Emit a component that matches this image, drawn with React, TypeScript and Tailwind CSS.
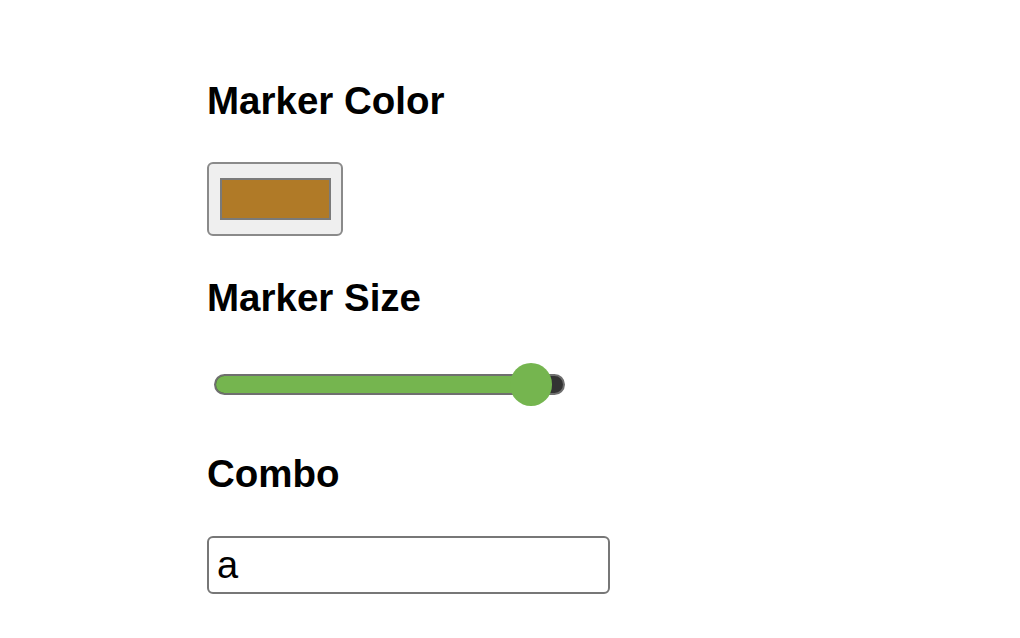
export default function App() {
  return (
    <div className="min-h-[638px] w-[1020px] bg-white pl-[207px] pt-[82px] font-['Liberation_Sans',Arial,sans-serif] text-black">
      <h3 className="text-[38.5px] font-bold leading-[38px]">Marker Color</h3>
      <div className="mt-[42px] flex h-[74px] w-[136px] items-center justify-center rounded-[6px] border-2 border-[#8a8a8a] bg-[#efefef]">
        <div className="h-[42px] w-[111px] border-2 border-[#7a7a7a] bg-[#b07a27]" />
      </div>
      <h3 className="mt-[43px] text-[38.5px] font-bold leading-[38px]">Marker Size</h3>
      <div className="relative mt-[45px] flex h-[44px] w-[360px] items-center">
        <div className="ml-[7px] flex h-[21px] w-[351px] overflow-hidden rounded-full border-2 border-[#6f6f6f] bg-[#333]">
          <div className="h-full w-[320px] bg-[#75b54f]" />
        </div>
        <div className="absolute left-[303px] top-[1px] h-[43px] w-[42px] rounded-full bg-[#75b54f]" />
      </div>
      <h3 className="mt-[49px] text-[38.5px] font-bold leading-[38px]">Combo</h3>
      <input
        defaultValue="a"
        className="mt-[43px] block h-[58px] w-[403px] rounded-[6px] border-2 border-[#777] bg-white px-[8px] text-[38px] text-black outline-none"
      />
    </div>
  );
}
